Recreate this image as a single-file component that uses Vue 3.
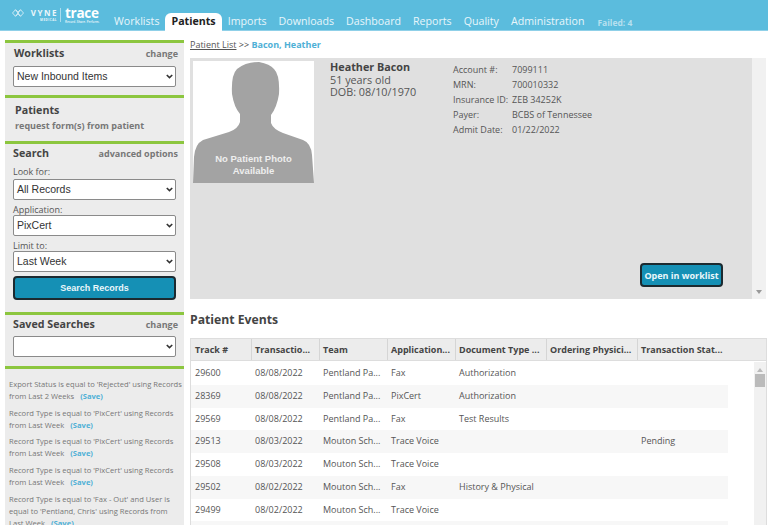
<script setup>
const tabs = ['Worklists', 'Patients', 'Imports', 'Downloads', 'Dashboard', 'Reports', 'Quality', 'Administration']
const saved = [
  "Export Status is equal to 'Rejected' using Records from Last 2 Weeks",
  "Record Type is equal to 'PixCert' using Records from Last Week",
  "Record Type is equal to 'PixCert' using Records from Last Week",
  "Record Type is equal to 'PixCert' using Records from Last Week",
  "Record Type is equal to 'Fax - Out' and User is equal to 'Pentland, Chris' using Records from Last Week",
]
const info = [
  ['Account #:', '7099111'],
  ['MRN:', '700010332'],
  ['Insurance ID:', 'ZEB 34252K'],
  ['Payer:', 'BCBS of Tennessee'],
  ['Admit Date:', '01/22/2022'],
]
const cols = ['Track #', 'Transactio...', 'Team', 'Application...', 'Document Type ...', 'Ordering Physici...', 'Transaction Stat...']
const rows = [
  ['29600', '08/08/2022', 'Pentland Pa...', 'Fax', 'Authorization', '', ''],
  ['28369', '08/08/2022', 'Pentland Pa...', 'PixCert', 'Authorization', '', ''],
  ['29569', '08/08/2022', 'Pentland Pa...', 'Fax', 'Test Results', '', ''],
  ['29513', '08/03/2022', 'Mouton Sch...', 'Trace Voice', '', '', 'Pending'],
  ['29508', '08/03/2022', 'Mouton Sch...', 'Trace Voice', '', '', ''],
  ['29502', '08/02/2022', 'Mouton Sch...', 'Fax', 'History & Physical', '', ''],
  ['29499', '08/02/2022', 'Mouton Sch...', 'Trace Voice', '', '', ''],
  ['', '', '', '', '', '', ''],
]
</script>

<template>
  <div class="page">
    <header class="top">
      <div class="logo">
        <svg class="knot" width="12" height="8" viewBox="0 0 12 8">
          <path d="M0.5 4 L3.5 0.7 L6 3.2 L8.5 0.7 L11.5 4 L8.5 7.3 L6 4.8 L3.5 7.3 Z M3.5 0.7 L8.5 7.3 M8.5 0.7 L3.5 7.3" fill="none" stroke="#e4f4fa" stroke-width="0.8" />
        </svg>
        <div class="vyne"><span class="vyne-name">VYNE</span><span class="vyne-sub">MEDICAL</span></div>
        <div class="logo-sep"></div>
        <div class="trace"><span class="trace-name">trace</span><span class="trace-sub">Record. Share. Perform.</span></div>
      </div>
      <nav class="tabs">
        <span v-for="t in tabs" :key="t" class="tab" :class="{ active: t === 'Patients' }">{{ t }}</span>
        <span class="failed">Failed: 4</span>
      </nav>
    </header>

    <div class="main">
      <aside class="side">
        <section class="block b-work">
          <div class="bhead"><span class="btitle">Worklists</span><span class="blink">change</span></div>
          <div class="sel">New Inbound Items<svg class="chev" width="7" height="5" viewBox="0 0 9 6"><path d="M1 1 L4.5 4.5 L8 1" fill="none" stroke="#333" stroke-width="2" /></svg></div>
        </section>
        <section class="block b-pat">
          <div class="btitle">Patients</div>
          <div class="blink req">request form(s) from patient</div>
        </section>
        <section class="block b-search">
          <div class="bhead shead"><span class="btitle">Search</span><span class="blink">advanced options</span></div>
          <label class="lab l1">Look for:</label>
          <div class="sel">All Records<svg class="chev" width="7" height="5" viewBox="0 0 9 6"><path d="M1 1 L4.5 4.5 L8 1" fill="none" stroke="#333" stroke-width="2" /></svg></div>
          <label class="lab">Application:</label>
          <div class="sel">PixCert<svg class="chev" width="7" height="5" viewBox="0 0 9 6"><path d="M1 1 L4.5 4.5 L8 1" fill="none" stroke="#333" stroke-width="2" /></svg></div>
          <label class="lab">Limit to:</label>
          <div class="sel">Last Week<svg class="chev" width="7" height="5" viewBox="0 0 9 6"><path d="M1 1 L4.5 4.5 L8 1" fill="none" stroke="#333" stroke-width="2" /></svg></div>
          <div class="btn wide">Search Records</div>
        </section>
        <section class="block b-saved">
          <div class="bhead shead"><span class="btitle">Saved Searches</span><span class="blink">change</span></div>
          <div class="sel"><svg class="chev" width="7" height="5" viewBox="0 0 9 6"><path d="M1 1 L4.5 4.5 L8 1" fill="none" stroke="#333" stroke-width="2" /></svg></div>
        </section>
        <section class="block b-list">
          <p v-for="(s, i) in saved" :key="i">{{ s }} <a>(Save)</a></p>
        </section>
      </aside>

      <main class="content">
        <div class="crumb"><span class="crumb-link">Patient List</span> &gt;&gt; <b>Bacon, Heather</b></div>
        <div class="panel-row">
          <div class="panel">
            <div class="photo">
              <svg width="121" height="122" viewBox="0 0 121 122">
                <path d="M0 122 L1 96 Q2 83 10 79 L36 71 Q45 68 47 61 L47 53 Q41 46 39 33 Q38 14 44 8 Q53 1 66 1 Q77 3 81 8 Q87 14 86 33 Q84 46 78 54 L78 62 Q80 68 90 72 L110 79 Q118 82 119 94 L121 122 Z" fill="#a3a3a3" />
              </svg>
              <div class="photo-text">No Patient Photo<br />Available</div>
            </div>
            <div class="who">
              <div class="who-name">Heather Bacon</div>
              <div>51 years old</div>
              <div>DOB: 08/10/1970</div>
            </div>
            <div class="info">
              <template v-for="r in info" :key="r[0]"><span>{{ r[0] }}</span><span>{{ r[1] }}</span></template>
            </div>
            <div class="btn open">Open in worklist</div>
          </div>
          <div class="sb">
            <svg class="arr" width="6" height="4" viewBox="0 0 6 4"><path d="M0 0 H6 L3 4 Z" fill="#999" /></svg>
          </div>
        </div>

        <h2 class="events">Patient Events</h2>
        <div class="table">
          <div class="thead">
            <div v-for="c in cols" :key="c" class="th">{{ c }}</div>
          </div>
          <div class="tbody">
            <div class="rows">
              <div v-for="(r, i) in rows" :key="i" class="tr">
                <div v-for="(c, j) in r" :key="j" class="td">{{ c }}</div>
              </div>
            </div>
            <div class="vsb">
              <svg width="6" height="4" viewBox="0 0 6 4"><path d="M0 4 H6 L3 0 Z" fill="#bbb" /></svg>
              <div class="thumb"></div>
            </div>
          </div>
        </div>
      </main>
    </div>
  </div>
</template>

<style>
html, body { margin: 0; background: #fff; overflow: hidden; }
</style>

<style scoped>
.page { width: 768px; height: 525px; overflow: hidden; font-family: "Open Sans", sans-serif; color: #555; font-size: 10px; }
.top { height: 31px; background: #5bbcdd; display: flex; box-sizing: border-box; border-bottom: 1px solid #8fd0e8; }
.logo { width: 108px; padding: 8px 0 0 12px; box-sizing: border-box; display: flex; align-items: flex-start; color: #eaf6fb; flex: none; }
.knot { margin-top: 1px; flex: none; }
.vyne { display: flex; flex-direction: column; align-items: flex-end; margin-left: 4px; width: 29px; flex: none; }
.vyne-name { font: 700 8px/10px "Open Sans", sans-serif; letter-spacing: 1.5px; margin-right: -1px; }
.vyne-sub { font: 700 3px/4px "Open Sans", sans-serif; letter-spacing: .5px; }
.logo-sep { width: 1px; height: 14px; background: #a9dcee; margin: 0 4px 0 3px; flex: none; }
.trace { display: flex; flex-direction: column; margin-top: -1px; }
.trace-name { font: 700 13.5px/13px "Open Sans", sans-serif; color: #fff; letter-spacing: -.3px; }
.trace-sub { font: 600 3px/4px "Open Sans", sans-serif; white-space: nowrap; }
.tabs { display: flex; align-items: flex-end; height: 31px; flex: none; }
.tab { color: #e8f6fb; font-size: 10.65px; line-height: 17px; padding: 0 6px; height: 18px; box-sizing: border-box; }
.tab.active { background: #fff; color: #222; font-weight: 700; border-radius: 6px 6px 0 0; }
.failed { color: #b7e0ef; font-size: 8.5px; font-weight: 700; line-height: 16px; margin-left: 7px; height: 16px; }

.main { display: flex; padding: 0 0 0 5px; }
.side { width: 179px; margin-top: 9px; flex: none; background: #ececec; height: 490px; overflow: hidden; }
.block { border-top: 3px solid #8cc63f; box-sizing: border-box; padding: 0 8px; }
.b-work { height: 55px; }
.b-pat { height: 46px; padding-top: 4px; padding-left: 10px; }
.b-search { height: 171px; }
.b-saved { height: 54px; }
.bhead { display: flex; justify-content: space-between; align-items: center; height: 20px; margin: 0 -2px 3px 1px; }
.shead { height: 18px; margin-left: 0; }
.b-search .shead { margin-bottom: 0; }
.btitle { font-size: 10.7px; font-weight: 700; color: #444; line-height: 16px; }
.blink { font-size: 9px; font-weight: 700; color: #777; line-height: 13px; }
.req { margin-top: 1px; }
.sel { position: relative; height: 21px; box-sizing: border-box; background: #fff; border: 1px solid #8a8a8a; border-radius: 2px; font: 10.5px/19px "Liberation Sans", sans-serif; color: #333; padding-left: 3px; }
.chev { position: absolute; right: 2px; top: 7px; }
.lab { display: block; font-size: 9px; color: #555; line-height: 17px; margin-top: 1px; height: 14px; }
.l1 { margin-top: 3px; line-height: 14px; }
.btn { background: #1590b5; color: #eaf7fb; font: 700 9px/1 "Liberation Sans", sans-serif; display: flex; align-items: center; justify-content: center; border: 2px solid #1c2a30; border-radius: 4px; box-sizing: border-box; }
.wide { height: 24px; margin-top: 4px; }
.b-list { padding: 9px 0 0 4px; }
.b-list p { margin: 0 0 4.7px; font-size: 7.6px; line-height: 12px; color: #777; }
.b-list a { font-weight: 700; color: #4fb0d6; margin-left: 4px; }

.content { width: 578px; margin-left: 6px; flex: none; }
.crumb { font-size: 9px; line-height: 12px; padding-top: 8px; height: 27px; box-sizing: border-box; color: #444; }
.crumb-link { text-decoration: underline; color: #555; }
.crumb b { color: #4fb0d6; }
.panel-row { display: flex; height: 241px; }
.panel { position: relative; width: 562px; background: #e0e0e0; display: flex; box-sizing: border-box; padding: 3px; }
.sb { width: 14px; background: #f1f1f1; position: relative; }
.arr { position: absolute; left: 4px; bottom: 5px; }
.photo { position: relative; width: 121px; height: 122px; background: #fff; flex: none; }
.photo svg { display: block; }
.photo-text { position: absolute; left: 0; right: 0; top: 92px; text-align: center; color: #eee; font: 700 9.5px/12px "Liberation Sans", sans-serif; }
.who { margin-left: 16px; width: 100px; flex: none; font-size: 10.8px; line-height: 12.5px; color: #555; }
.who-name { font-weight: 700; color: #444; }
.info { margin-left: 23px; display: grid; grid-template-columns: 59px auto; grid-auto-rows: 15px; align-content: start; font-size: 9px; line-height: 15px; color: #555; padding-top: 1px; }
.btn.open { position: absolute; left: 450px; top: 205px; width: 83px; height: 24px; font-family: "Open Sans", sans-serif; font-size: 9px; }
.events { margin: 12px 0 10px; font-size: 12.2px; line-height: 17px; font-weight: 700; color: #444; }
.table { width: 577px; height: 190px; border: 1px solid #ddd; box-sizing: border-box; }
.thead { display: grid; grid-template-columns: 60px 68px 68px 68px 91px 91px 130px; height: 22px; background: #ececec; border-bottom: 1px solid #ddd; box-sizing: border-box; }
.th { font-size: 9px; font-weight: 700; color: #444; line-height: 21px; padding-left: 3px; border-left: 1px solid #d5d5d5; white-space: nowrap; }
.th:first-child { border-left: 0; padding-left: 4px; }
.tbody { display: flex; padding-top: 1px; }
.rows { width: 537px; flex: none; }
.tr { display: grid; grid-template-columns: 60px 68px 68px 68px 91px 91px 91px; height: 22.75px; }
.tr:nth-child(even) { background: #f7f7f7; }
.td { font-size: 9px; line-height: 22px; padding-left: 4px; color: #555; white-space: nowrap; }
.vsb { margin-left: 26px; width: 12px; height: 170px; background: #f1f1f1; display: flex; flex-direction: column; align-items: center; padding-top: 6px; }
.thumb { width: 10px; height: 13px; background: #bbb; margin-top: 2px; }
</style>
